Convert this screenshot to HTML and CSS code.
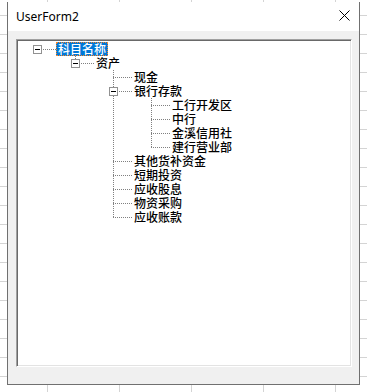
FILE: index.html
```html
<!DOCTYPE html>
<html>
<head>
    <meta charset="UTF-8">
    <title>UserForm2</title>
    <link rel="stylesheet" href="styles.css">
</head>
<body>
<div class="window">
    <div class="titlebar">
        <span class="title">UserForm2</span>
        <svg class="close" width="11" height="11" viewBox="0 0 11 11">
            <path d="M0.5 0.5L10.5 10.5M10.5 0.5L0.5 10.5" stroke="#000" stroke-width="1" fill="none"/>
        </svg>
    </div>
    <div class="tree">
        <div class="row"><span class="c r"><i class="box"></i></span><span class="label sel">科目名称</span></div>
        <div class="row"><span class="c"></span><span class="c e"><i class="box"></i></span><span class="label">资产</span></div>
        <div class="row"><span class="c"></span><span class="c"></span><span class="c t"></span><span class="label">现金</span></div>
        <div class="row"><span class="c"></span><span class="c"></span><span class="c t"><i class="box"></i></span><span class="label">银行存款</span></div>
        <div class="row"><span class="c"></span><span class="c"></span><span class="c v"></span><span class="c t"></span><span class="label">工行开发区</span></div>
        <div class="row"><span class="c"></span><span class="c"></span><span class="c v"></span><span class="c t"></span><span class="label">中行</span></div>
        <div class="row"><span class="c"></span><span class="c"></span><span class="c v"></span><span class="c t"></span><span class="label">金溪信用社</span></div>
        <div class="row"><span class="c"></span><span class="c"></span><span class="c v"></span><span class="c e"></span><span class="label">建行营业部</span></div>
        <div class="row"><span class="c"></span><span class="c"></span><span class="c t"></span><span class="label">其他货补资金</span></div>
        <div class="row"><span class="c"></span><span class="c"></span><span class="c t"></span><span class="label">短期投资</span></div>
        <div class="row"><span class="c"></span><span class="c"></span><span class="c t"></span><span class="label">应收股息</span></div>
        <div class="row"><span class="c"></span><span class="c"></span><span class="c t"></span><span class="label">物资采购</span></div>
        <div class="row"><span class="c"></span><span class="c"></span><span class="c e"></span><span class="label">应收账款</span></div>
    </div>
</div>
</body>
</html>
```
FILE: styles.css
```css
html, body { margin: 0; }
body {
    background-color: #fff;
    background-image:
        linear-gradient(to bottom, transparent 15px, #d4d4d4 15px 16px, transparent 16px),
        linear-gradient(to right, transparent 47px, #d4d4d4 47px 48px, transparent 48px);
    background-size: 100% 19px, 72px 100%;
    height: 392px;
}

.window { width: 353px; height: 383px; margin: 2px 0 0 7px; box-sizing: border-box;
    border: 1px solid #707070; border-top: 0; background: #f0f0f0;
    display: flex; flex-direction: column; }
.titlebar { height: 29px; flex: none; background: #fff; display: flex;
    justify-content: space-between; align-items: flex-start; }
.title { font: 12px/29px "Noto Sans", sans-serif; padding-left: 8px; color: #000; }
.close { margin: 8px 9px 0 0; }

.tree { margin: 8px 0 0 8px; width: 336px; height: 328px; box-sizing: border-box;
    background: #fff; border: 1px solid; border-color: #a0a0a0 #fff #fff #a0a0a0;
    box-shadow: inset 1px 1px #696969, inset -1px -1px #e3e3e3;
    padding: 2px 0 0 1px; font: 500 12px "Noto Sans CJK SC", sans-serif; color: #000; }

.row { display: flex; height: 14px; }
.c { width: 38px; height: 14px; flex: none; display: block; }
/* dotted tree lines */
.c.v { background: repeating-linear-gradient(to bottom, #808080 0 1px, transparent 1px 2px) 19px 0 / 1px 14px no-repeat; }
.c.t { background:
        repeating-linear-gradient(to right, #808080 0 1px, transparent 1px 2px) 19px 7px / 20px 1px no-repeat,
        repeating-linear-gradient(to bottom, #808080 0 1px, transparent 1px 2px) 19px 0 / 1px 14px no-repeat; }
.c.e { background:
        repeating-linear-gradient(to right, #808080 0 1px, transparent 1px 2px) 19px 7px / 20px 1px no-repeat,
        repeating-linear-gradient(to bottom, #808080 0 1px, transparent 1px 2px) 19px 0 / 1px 8px no-repeat; }
.c.r { background: repeating-linear-gradient(to right, #808080 0 1px, transparent 1px 2px) 19px 7px / 19px 1px no-repeat; }

.box { display: block; width: 9px; height: 9px; box-sizing: border-box; margin: 3px 0 0 15px;
    border: 1px solid #919191;
    background: linear-gradient(#000, #000) center / 5px 1px no-repeat, #fff; }

.label { display: block; height: 14px; line-height: 14px; padding: 0 2px; white-space: nowrap; }
.label.sel { background: #0078d7; color: #fff; outline: 1px dotted #ff8728; outline-offset: -1px; }
```
